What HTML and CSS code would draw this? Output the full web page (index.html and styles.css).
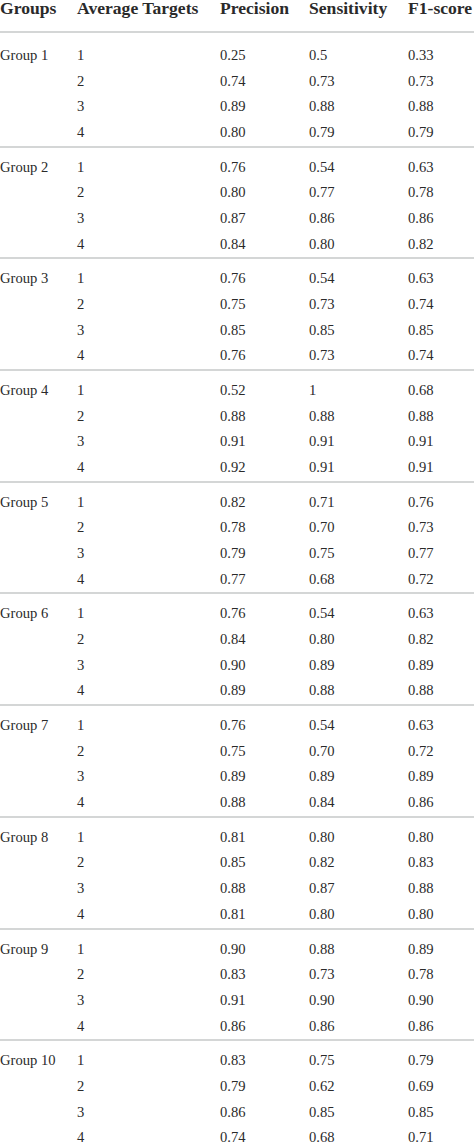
FILE: index.html
```html
<!DOCTYPE html>
<html>
<head>
<meta charset="utf-8">
<link rel="stylesheet" href="styles.css">
</head>
<body>
<table class="results">
<thead>
<tr><th class="c1">Groups</th><th class="c2">Average Targets</th><th class="c3">Precision</th><th class="c4">Sensitivity</th><th class="c5">F1-score</th></tr>
</thead>
<tbody class="top">
<tr class="first"><td>Group 1</td><td>1</td><td>0.25</td><td>0.5</td><td>0.33</td></tr>
<tr><td></td><td>2</td><td>0.74</td><td>0.73</td><td>0.73</td></tr>
<tr><td></td><td>3</td><td>0.89</td><td>0.88</td><td>0.88</td></tr>
<tr class="last"><td></td><td>4</td><td>0.80</td><td>0.79</td><td>0.79</td></tr>
</tbody>
<tbody>
<tr class="first"><td>Group 2</td><td>1</td><td>0.76</td><td>0.54</td><td>0.63</td></tr>
<tr><td></td><td>2</td><td>0.80</td><td>0.77</td><td>0.78</td></tr>
<tr><td></td><td>3</td><td>0.87</td><td>0.86</td><td>0.86</td></tr>
<tr class="last"><td></td><td>4</td><td>0.84</td><td>0.80</td><td>0.82</td></tr>
</tbody>
<tbody>
<tr class="first"><td>Group 3</td><td>1</td><td>0.76</td><td>0.54</td><td>0.63</td></tr>
<tr><td></td><td>2</td><td>0.75</td><td>0.73</td><td>0.74</td></tr>
<tr><td></td><td>3</td><td>0.85</td><td>0.85</td><td>0.85</td></tr>
<tr class="last"><td></td><td>4</td><td>0.76</td><td>0.73</td><td>0.74</td></tr>
</tbody>
<tbody>
<tr class="first"><td>Group 4</td><td>1</td><td>0.52</td><td>1</td><td>0.68</td></tr>
<tr><td></td><td>2</td><td>0.88</td><td>0.88</td><td>0.88</td></tr>
<tr><td></td><td>3</td><td>0.91</td><td>0.91</td><td>0.91</td></tr>
<tr class="last"><td></td><td>4</td><td>0.92</td><td>0.91</td><td>0.91</td></tr>
</tbody>
<tbody>
<tr class="first"><td>Group 5</td><td>1</td><td>0.82</td><td>0.71</td><td>0.76</td></tr>
<tr><td></td><td>2</td><td>0.78</td><td>0.70</td><td>0.73</td></tr>
<tr><td></td><td>3</td><td>0.79</td><td>0.75</td><td>0.77</td></tr>
<tr class="last"><td></td><td>4</td><td>0.77</td><td>0.68</td><td>0.72</td></tr>
</tbody>
<tbody>
<tr class="first"><td>Group 6</td><td>1</td><td>0.76</td><td>0.54</td><td>0.63</td></tr>
<tr><td></td><td>2</td><td>0.84</td><td>0.80</td><td>0.82</td></tr>
<tr><td></td><td>3</td><td>0.90</td><td>0.89</td><td>0.89</td></tr>
<tr class="last"><td></td><td>4</td><td>0.89</td><td>0.88</td><td>0.88</td></tr>
</tbody>
<tbody>
<tr class="first"><td>Group 7</td><td>1</td><td>0.76</td><td>0.54</td><td>0.63</td></tr>
<tr><td></td><td>2</td><td>0.75</td><td>0.70</td><td>0.72</td></tr>
<tr><td></td><td>3</td><td>0.89</td><td>0.89</td><td>0.89</td></tr>
<tr class="last"><td></td><td>4</td><td>0.88</td><td>0.84</td><td>0.86</td></tr>
</tbody>
<tbody>
<tr class="first"><td>Group 8</td><td>1</td><td>0.81</td><td>0.80</td><td>0.80</td></tr>
<tr><td></td><td>2</td><td>0.85</td><td>0.82</td><td>0.83</td></tr>
<tr><td></td><td>3</td><td>0.88</td><td>0.87</td><td>0.88</td></tr>
<tr class="last"><td></td><td>4</td><td>0.81</td><td>0.80</td><td>0.80</td></tr>
</tbody>
<tbody>
<tr class="first"><td>Group 9</td><td>1</td><td>0.90</td><td>0.88</td><td>0.89</td></tr>
<tr><td></td><td>2</td><td>0.83</td><td>0.73</td><td>0.78</td></tr>
<tr><td></td><td>3</td><td>0.91</td><td>0.90</td><td>0.90</td></tr>
<tr class="last"><td></td><td>4</td><td>0.86</td><td>0.86</td><td>0.86</td></tr>
</tbody>
<tbody>
<tr class="first"><td>Group 10</td><td>1</td><td>0.83</td><td>0.75</td><td>0.79</td></tr>
<tr><td></td><td>2</td><td>0.79</td><td>0.62</td><td>0.69</td></tr>
<tr><td></td><td>3</td><td>0.86</td><td>0.85</td><td>0.85</td></tr>
<tr class="final"><td></td><td>4</td><td>0.74</td><td>0.68</td><td>0.71</td></tr>
</tbody>
</table>
</body>
</html>
```
FILE: styles.css
```css
html, body {
  margin: 0;
  padding: 0;
  background: #ffffff;
  overflow: hidden;
}
body {
  width: 474px;
  height: 1144px;
  font-family: "Liberation Serif", "Times New Roman", serif;
  color: #2a2a2a;
}
.results {
  border-collapse: collapse;
  table-layout: fixed;
  width: 474px;
}
.results th, .results td {
  padding: 0;
  text-align: left;
  white-space: nowrap;
}
.results th {
  font-weight: bold;
  font-size: 17.6px;
  line-height: 16px;
  height: 16px;
  padding: 0 0 15px 0;
  vertical-align: top;
  border-bottom: 2px solid #d4d6d6;
}
.c1 { width: 77px; }
.c2 { width: 143px; }
.c3 { width: 89px; }
.c4 { width: 99px; }
.c5 { width: 66px; }
.results td {
  font-size: 14.6px;
  height: 25.67px;
  line-height: 25.67px;
  vertical-align: bottom;
}
.results tr.first td {
  padding-top: 7px;
}
.results tbody.top tr.first td {
  padding-top: 10px;
}
.results tr.last td {
  border-bottom: 2px solid #d4d6d6;
}
```
